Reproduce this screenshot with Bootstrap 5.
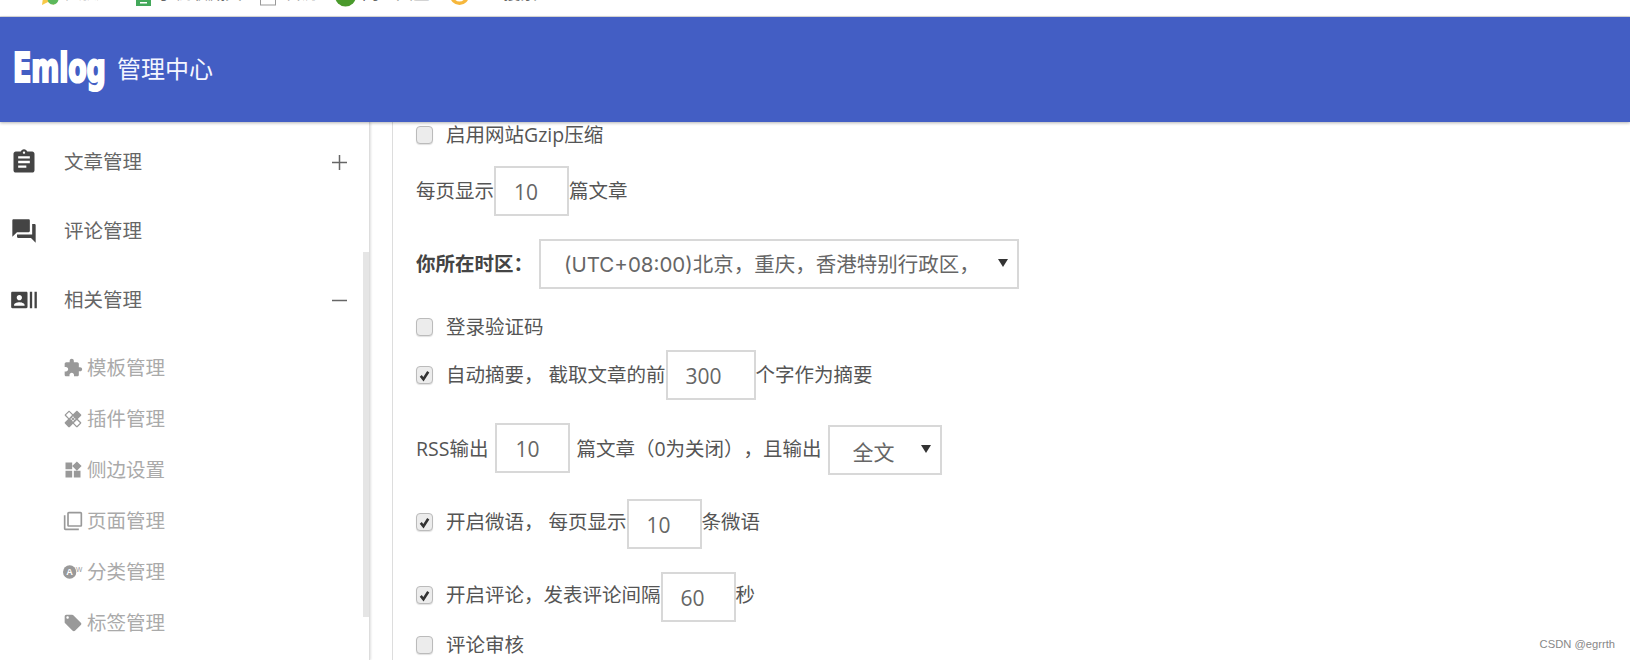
<!DOCTYPE html>
<html lang="zh-CN">
<head>
<meta charset="utf-8">
<title>Emlog 管理中心</title>
<link href="https://cdn.jsdelivr.net/npm/bootstrap@5.3.0/dist/css/bootstrap.min.css" rel="stylesheet">
<style>
html,body{height:660px;overflow:hidden;background:#fff;}
body{font-family:"Open Sans","Noto Sans CJK SC",sans-serif;color:#555;font-size:19.5px;position:relative;text-spacing-trim:space-all;}
.bm-bar{height:17px;overflow:hidden;background:#fff;border-bottom:1px solid #ddd;}
.bm-inner{margin-top:-16px;height:23px;font-size:17px;color:#666;font-family:"Liberation Sans","Noto Sans CJK SC",sans-serif;line-height:20px;}
.bm-inner span{white-space:nowrap;}
.bm-cell{gap:6px;}
.bm1{margin-left:38px;}.bm2{margin-left:37px;}.bm3{margin-left:18px;gap:9px;}.bm4{margin-left:16px;}.bm5{margin-left:20px;}
.top-head{height:105px;background:#435ec4;box-shadow:0 1px 3px rgba(0,0,0,.3);position:relative;z-index:2;padding-left:13px;}
.logo-word{font-family:"DejaVu Sans Condensed","DejaVu Sans",sans-serif;font-weight:700;font-size:30px;line-height:1;color:#fff;-webkit-text-stroke:1.6px #fff;display:inline-block;transform:translateY(-2px) scaleY(1.36);transform-origin:50% 50%;width:94px;letter-spacing:-.2px;}
.logo-sub{font-size:24px;line-height:1;color:#f4f6ff;margin-left:10px;margin-top:-1px;}
.page-body{height:538px;overflow:hidden;}
.side-nav{width:370px;flex:none;border-right:1px solid #ddd;box-shadow:1px 0 2px rgba(0,0,0,.12);padding-top:5.5px;height:100%;overflow:hidden;position:relative;background:#fff;}
.thumb-bar{position:absolute;right:0;top:130px;width:6px;height:365px;background:#e5e5e5;}
.main-item{height:69px;padding-left:10px;padding-right:21px;color:#666;}
.main-item svg{width:28px;height:28px;fill:#444;flex:none;margin-right:26px;}
.sign-mark{margin-left:auto;}
.sign-mark svg{width:17px;height:17px;fill:none;stroke:#666;stroke-width:1.5;margin:0;display:block;}
.sub-list{padding-top:8px;}
.sub-item{height:51px;padding-left:63px;color:#aaa;}
.sub-item svg{width:20px;height:20px;fill:#999;flex:none;margin-right:4px;}
.main-space{width:22px;flex:none;}
.cfg-pane{flex:1;border-left:1px solid #ddd;padding-left:23px;height:100%;overflow:hidden;}
.cfg-row{white-space:nowrap;}
.r1{height:24px;margin-top:1px;}
.r2{height:50px;margin-top:19px;}
.r3{height:50px;margin-top:23px;}
.r4{height:24px;margin-top:26px;}
.r5{height:50px;margin-top:11px;}
.r6{height:52px;margin-top:23px;}
.r7{height:50px;margin-top:24px;}
.r8{height:50px;margin-top:23px;}
.r9{height:24px;margin-top:11px;}
.up2{position:relative;top:-2px;}
.form-check-input.tick-box{width:17px;height:18px;margin:0 13px 0 0;flex:none;background-color:#ececec;border:1px solid #bbb;border-radius:4px;box-shadow:0 1px 1px rgba(0,0,0,.12);}
.form-check-input.tick-box:checked{background-color:#ececec;border-color:#bbb;background-image:url("data:image/svg+xml,%3csvg xmlns='http://www.w3.org/2000/svg' viewBox='0 0 20 20'%3e%3cpath fill='none' stroke='%23333' stroke-width='3.4' d='M5 10.5l3.6 4.5L15 5'/%3e%3c/svg%3e");}
.form-control.num-box{height:50px;width:75px;flex:none;border:2px solid #d8d8d8;border-radius:0;padding:2px 0 0 18px;font-size:21px;color:#666;box-shadow:none;}
.form-control.num-box.w-wide{width:90px;}
.gap-l{margin-left:7px;}
.gap-r{margin-right:6px;}
.form-select.drop-box{height:50px;border:2px solid #d8d8d8;border-radius:0;font-size:21px;color:#666;padding:3px 44px 0 23px;background-image:url("data:image/svg+xml,%3csvg xmlns='http://www.w3.org/2000/svg' viewBox='0 0 10 10'%3e%3cpath fill='%23333' d='M0 1h10L5 9z'/%3e%3c/svg%3e");background-position:right 9px top 17px;background-size:10px 10px;box-shadow:none;}
.form-select.drop-tz{width:480px;margin-left:6px;font-size:20.5px;padding-right:46px;font-family:Inter,"Noto Sans CJK SC",sans-serif;}
.form-select.drop-all{width:114px;margin-left:6px;margin-top:2px;padding-top:5px;}
.zone-label{font-weight:700;color:#444;}
.mark-csdn{position:absolute;right:15px;top:636px;font:11.2px/16px "Liberation Sans",sans-serif;color:#888;z-index:3;}
</style>
</head>
<body>
<div class="bm-bar">
  <div class="bm-inner d-flex align-items-start">
    <span class="bm1 bm-cell d-flex align-items-start">
      <svg width="21" height="22" viewBox="0 0 21 22"><path fill="#f7c948" d="M10 2l3 6 7 1-5 5 1 7-6-3-6 3 1-7-5-5 7-1z"/><circle cx="15" cy="15" r="5.5" fill="#5cb85c"/></svg>
      <span>火狐</span>
    </span>
    <span class="bm2 bm-cell d-flex align-items-start">
      <svg width="15" height="22" viewBox="0 0 15 22"><rect width="15" height="22" fill="#43a85a"/><rect x="4" y="18" width="7" height="1.5" fill="#fff"/></svg>
      <span>手机收藏夹</span>
    </span>
    <span class="bm3 bm-cell d-flex align-items-start">
      <svg width="16" height="22" viewBox="0 0 16 22"><rect x=".5" y=".5" width="15" height="20.5" fill="#fff" stroke="#999"/></svg>
      <span>日历</span>
    </span>
    <span class="bm4 bm-cell d-flex align-items-start">
      <svg width="21" height="23" viewBox="0 0 21 23"><circle cx="10.5" cy="12" r="10.5" fill="#4a9a2c"/><circle cx="11" cy="9" r="6.5" fill="#f2c230"/></svg>
      <span>网址大全</span>
    </span>
    <span class="bm5 bm-cell d-flex align-items-start">
      <svg width="19" height="22" viewBox="0 0 19 22"><circle cx="9.5" cy="11.5" r="7.8" fill="none" stroke="#f6b73c" stroke-width="3.4"/></svg>
      <span>360搜索</span>
    </span>
  </div>
</div>

<header class="top-head d-flex align-items-center">
  <span class="logo-word">Emlog</span>
  <span class="logo-sub">管理中心</span>
</header>

<div class="page-body d-flex">
  <aside class="side-nav">
    <div class="main-item d-flex align-items-center">
      <svg viewBox="0 0 24 24"><path d="M19 3h-4.18C14.4 1.84 13.3 1 12 1c-1.3 0-2.4.84-2.82 2H5c-1.1 0-2 .9-2 2v14c0 1.1.9 2 2 2h14c1.1 0 2-.9 2-2V5c0-1.1-.9-2-2-2zm-7 0c.55 0 1 .45 1 1s-.45 1-1 1-1-.45-1-1 .45-1 1-1zm2 14H7v-2h7v2zm3-4H7v-2h10v2zm0-4H7V7h10v2z"/></svg>
      <span>文章管理</span>
      <span class="sign-mark"><svg viewBox="0 0 17 17"><path d="M8.5 1v15M1 8.5h15"/></svg></span>
    </div>
    <div class="main-item d-flex align-items-center">
      <svg viewBox="0 0 24 24"><path d="M21 6h-2v9H6v2c0 .55.45 1 1 1h11l4 4V7c0-.55-.45-1-1-1zm-4 6V3c0-.55-.45-1-1-1H3c-.55 0-1 .45-1 1v14l4-4h10c.55 0 1-.45 1-1z"/></svg>
      <span>评论管理</span>
    </div>
    <div class="main-item d-flex align-items-center">
      <svg viewBox="0 0 24 24"><path d="M21 5v14h2V5h-2zm-4 14h2V5h-2v14zM14 5H2c-.55 0-1 .45-1 1v12c0 .55.45 1 1 1h12c.55 0 1-.45 1-1V6c0-.55-.45-1-1-1zM8 7.75c1.24 0 2.25 1.01 2.25 2.25S9.24 12.25 8 12.25 5.75 11.24 5.75 10 6.76 7.75 8 7.75zM12.5 17h-9v-.75c0-1.5 3-2.25 4.5-2.25s4.5.75 4.5 2.25V17z"/></svg>
      <span>相关管理</span>
      <span class="sign-mark"><svg viewBox="0 0 17 17"><path d="M1 8.5h15"/></svg></span>
    </div>
    <div class="sub-list">
      <div class="sub-item d-flex align-items-center">
        <svg viewBox="0 0 24 24"><path d="M20.5 11H19V7c0-1.1-.9-2-2-2h-4V3.5C13 2.12 11.88 1 10.5 1S8 2.12 8 3.5V5H4c-1.1 0-1.99.9-1.99 2v3.8H3.5c1.49 0 2.7 1.21 2.7 2.7s-1.21 2.7-2.7 2.7H2V20c0 1.1.9 2 2 2h3.8v-1.5c0-1.49 1.21-2.7 2.7-2.7 1.49 0 2.7 1.21 2.7 2.7V22H17c1.1 0 2-.9 2-2v-4h1.5c1.38 0 2.5-1.12 2.5-2.5S21.88 11 20.5 11z"/></svg>
        <span>模板管理</span>
      </div>
      <div class="sub-item d-flex align-items-center">
        <svg viewBox="0 0 24 24"><path d="M17.73 12.02l3.98-3.98c.39-.39.39-1.02 0-1.41l-4.34-4.34c-.39-.39-1.02-.39-1.41 0l-3.98 3.98L8 2.29C7.8 2.1 7.55 2 7.29 2c-.25 0-.51.1-.7.29L2.25 6.63c-.39.39-.39 1.02 0 1.41l3.98 3.98L2.25 16c-.39.39-.39 1.02 0 1.41l4.34 4.34c.39.39 1.02.39 1.41 0l3.98-3.98 3.98 3.98c.2.2.45.29.71.29.26 0 .51-.1.71-.29l4.34-4.34c.39-.39.39-1.02 0-1.41l-3.99-3.98zM12 9c.55 0 1 .45 1 1s-.45 1-1 1-1-.45-1-1 .45-1 1-1zm-4.71 1.96L3.66 7.34l3.63-3.63 3.62 3.62-3.62 3.63zM10 13c-.55 0-1-.45-1-1s.45-1 1-1 1 .45 1 1-.45 1-1 1zm2 2c-.55 0-1-.45-1-1s.45-1 1-1 1 .45 1 1-.45 1-1 1zm2-4c.55 0 1 .45 1 1s-.45 1-1 1-1-.45-1-1 .45-1 1-1zm2.66 9.34l-3.63-3.62 3.63-3.63 3.62 3.62-3.62 3.63z"/></svg>
        <span>插件管理</span>
      </div>
      <div class="sub-item d-flex align-items-center">
        <svg viewBox="0 0 24 24"><path d="M13 13v8h8v-8h-8zM3 21h8v-8H3v8zM3 3v8h8V3H3zm13.66-1.31L11 7.34 16.66 13l5.66-5.66-5.66-5.65z"/></svg>
        <span>侧边设置</span>
      </div>
      <div class="sub-item d-flex align-items-center">
        <svg viewBox="0 0 24 24"><path d="M3 5H1v16c0 1.1.9 2 2 2h16v-2H3V5zm18-4H7c-1.1 0-2 .9-2 2v14c0 1.1.9 2 2 2h14c1.1 0 2-.9 2-2V3c0-1.1-.9-2-2-2zm0 16H7V3h14v14z"/></svg>
        <span>页面管理</span>
      </div>
      <div class="sub-item d-flex align-items-center">
        <svg viewBox="0 0 24 24"><circle cx="8" cy="12" r="8"/><text x="8" y="16" font-size="11" font-weight="700" text-anchor="middle" fill="#fff" font-family="Liberation Sans">A</text><text x="19.5" y="12" font-size="8" text-anchor="middle" font-family="Liberation Sans">W</text></svg>
        <span>分类管理</span>
      </div>
      <div class="sub-item d-flex align-items-center">
        <svg viewBox="0 0 24 24"><path d="M21.41 11.58l-9-9C12.05 2.22 11.55 2 11 2H4c-1.1 0-2 .9-2 2v7c0 .55.22 1.05.59 1.42l9 9c.36.36.86.58 1.41.58.55 0 1.05-.22 1.41-.59l7-7c.37-.36.59-.86.59-1.41 0-.55-.23-1.06-.59-1.42zM5.5 7C4.67 7 4 6.33 4 5.5S4.67 4 5.5 4 7 4.67 7 5.5 6.33 7 5.5 7z"/></svg>
        <span>标签管理</span>
      </div>
    </div>
    <div class="thumb-bar"></div>
  </aside>
  <div class="main-space"></div>
  <main class="cfg-pane">
    <div class="cfg-row r1 d-flex align-items-center">
      <input class="form-check-input tick-box" type="checkbox"><span>启用网站Gzip压缩</span>
    </div>
    <div class="cfg-row r2 d-flex align-items-center">
      <span>每页显示</span><input class="form-control num-box" type="text" value="10"><span>篇文章</span>
    </div>
    <div class="cfg-row r3 d-flex align-items-center">
      <span class="zone-label">你所在时区：</span>
      <select class="form-select drop-box drop-tz"><option>(UTC+08:00)北京，重庆，香港特别行政区，乌鲁木齐</option></select>
    </div>
    <div class="cfg-row r4 d-flex align-items-center">
      <input class="form-check-input tick-box" type="checkbox"><span>登录验证码</span>
    </div>
    <div class="cfg-row r5 d-flex align-items-center">
      <input class="form-check-input tick-box" type="checkbox" checked><span>自动摘要， 截取文章的前</span><input class="form-control num-box w-wide" type="text" value="300"><span>个字作为摘要</span>
    </div>
    <div class="cfg-row r6 d-flex align-items-start">
      <span class="align-self-center">RSS输出</span><input class="form-control num-box gap-l gap-r" type="text" value="10"><span class="align-self-center">篇文章（0为关闭），且输出</span>
      <select class="form-select drop-box drop-all"><option>全文</option></select>
    </div>
    <div class="cfg-row r7 d-flex align-items-center">
      <input class="form-check-input tick-box up2" type="checkbox" checked><span class="up2">开启微语， 每页显示</span><input class="form-control num-box" type="text" value="10"><span class="up2">条微语</span>
    </div>
    <div class="cfg-row r8 d-flex align-items-center">
      <input class="form-check-input tick-box up2" type="checkbox" checked><span class="up2">开启评论，发表评论间隔</span><input class="form-control num-box" type="text" value="60"><span class="up2">秒</span>
    </div>
    <div class="cfg-row r9 d-flex align-items-center">
      <input class="form-check-input tick-box" type="checkbox"><span>评论审核</span>
    </div>
  </main>
</div>
<div class="mark-csdn">CSDN @egrrth</div>
<script src="https://cdn.jsdelivr.net/npm/bootstrap@5.3.0/dist/js/bootstrap.bundle.min.js"></script>
</body>
</html>
